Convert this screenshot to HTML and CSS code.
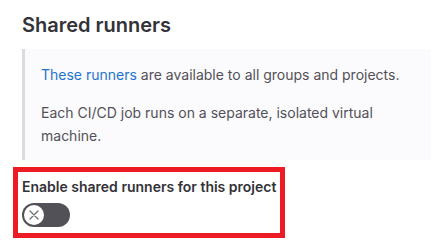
FILE: index.html
```html
<!DOCTYPE html>
<html>
<head>
  <title>Shared runners</title>
  <link rel="stylesheet" href="styles.css">
</head>

<body>
  <div class="settings">
    <h2>Shared runners</h2>

    <div class="note">
      <p><a href="#">These runners</a> are available to all groups and projects.</p>
      <p>Each CI/CD job runs on a separate, isolated virtual machine.</p>
    </div>

    <div class="highlight">
      <label class="toggle-label">Enable shared runners for this project</label>
      <button class="toggle" aria-label="Enable shared runners">
        <span class="knob">
          <svg width="12" height="12" viewBox="0 0 12 12">
            <path d="M2 2 L10 10 M10 2 L2 10" stroke="#737278" stroke-width="1.4" stroke-linecap="round" fill="none"/>
          </svg>
        </span>
      </button>
    </div>
  </div>
</body>
</html>
```

FILE: styles.css
```css
body {
  margin: 0;
  font-family: Inter, 'Noto Sans', sans-serif;
  color: #333238;
  background: white;
}
.settings {
  padding: 13px 15px 0 22px;
}
h2 {
  font-size: 20px;
  font-weight: 600;
  line-height: 24px;
  margin: 0 0 12px 0;
  color: #333238;
}
.note {
  background: #fbfafd;
  border-left: 3px solid #dcdcde;
  padding: 15px 16px 13px 16px;
  color: #535158;
  font-size: 14px;
  line-height: 22.4px;
}
.note p {
  margin: 0 0 16px 0;
}
.note p:last-child {
  margin-bottom: 0;
}
.note a {
  color: #1f75cb;
  text-decoration: none;
}
.highlight {
  margin: 7px 0 0 -9px;
  width: fit-content;
  border: 5px solid #ed1c24;
  padding: 5px 4px 6px 4px;
  display: flex;
  flex-direction: column;
  gap: 6px;
}
.toggle-label {
  font-size: 14px;
  font-weight: 600;
  line-height: 20px;
  color: #333238;
}
.toggle {
  width: 48px;
  height: 24px;
  border: none;
  border-radius: 12px;
  background: #535158;
  padding: 2px;
  display: flex;
  align-items: center;
  cursor: pointer;
}
.knob {
  width: 20px;
  height: 20px;
  border-radius: 50%;
  background: white;
  display: flex;
  align-items: center;
  justify-content: center;
}
```
